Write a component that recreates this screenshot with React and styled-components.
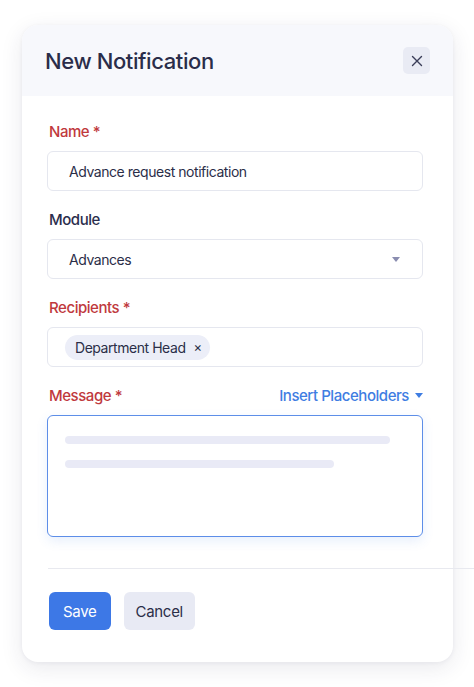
import React from "react";
import styled, { createGlobalStyle } from "styled-components";

const Global = createGlobalStyle`
  html, body { margin: 0; padding: 0; background: #ffffff; overflow: hidden; }
  body { font-family: Inter, "Noto Sans", sans-serif; -webkit-font-smoothing: antialiased; letter-spacing: -0.45px; }
  * { box-sizing: border-box; }
`;

const Page = styled.div`
  width: 474px;
  height: 687px;
  padding: 25px 0 0 22px;
`;

const Card = styled.div`
  width: 431px;
  height: 637px;
  background: #fff;
  border-radius: 16px;
  box-shadow: 0 6px 22px rgba(40, 44, 80, 0.10), 0 1px 4px rgba(40, 44, 80, 0.05);
  display: flex;
  flex-direction: column;
`;

const Header = styled.div`
  height: 71px;
  background: #f7f8fc;
  border-radius: 16px 16px 0 0;
  display: flex;
  align-items: center;
  justify-content: space-between;
  padding: 0 23px 0 23px;
`;

const Title = styled.h1`
  margin: 0;
  font-size: 22px;
  font-weight: 500;
  color: #2a2d4a;
  letter-spacing: -0.4px;
`;

const CloseBtn = styled.button`
  width: 27px;
  height: 27px;
  border: none;
  border-radius: 5px;
  background: #e9ebf4;
  display: flex;
  align-items: center;
  justify-content: center;
  padding: 0;
`;

const Body = styled.div`
  padding: 25px 30px 0 25px;
  display: flex;
  flex-direction: column;
`;

const Fields = styled.div`
  display: flex;
  flex-direction: column;
  gap: 18px;
`;

const Field = styled.div`
  display: flex;
  flex-direction: column;
  gap: 10px;
`;

const LabelRow = styled.div`
  display: flex;
  align-items: center;
  justify-content: space-between;
  height: 20px;
  padding-left: 2px;
`;

const Label = styled.label`
  font-size: 15px;
  font-weight: 500;
  color: ${(p) => (p.$required ? "#c0393d" : "#2b2e4d")};
`;

const Box = styled.div`
  height: ${(p) => p.$h || 40}px;
  border: 1px solid ${(p) => (p.$focus ? "#5d8ee8" : "#e5e7ef")};
  border-radius: 6px;
  background: #fff;
  display: flex;
  align-items: center;
  padding: 0 20px 0 21px;
  font-size: 14px;
  color: #2b2e48;
  box-shadow: ${(p) => (p.$focus ? "0 4px 12px rgba(61, 123, 228, 0.12)" : "none")};
`;

const SelectBox = styled(Box)`
  justify-content: space-between;
  padding-right: 22px;
`;

const Caret = styled.span`
  width: 0;
  height: 0;
  border-left: 4px solid transparent;
  border-right: 4px solid transparent;
  border-top: 5px solid ${(p) => p.$color || "#8a8db0"};
`;

const ChipBox = styled(Box)`
  padding-left: 17px;
`;

const Chip = styled.span`
  display: inline-flex;
  align-items: center;
  gap: 8px;
  height: 25px;
  padding: 0 8px 0 10px;
  border-radius: 13px;
  background: #eceef8;
  font-size: 14px;
  color: #2b2e48;
`;

const ChipX = styled.span`
  font-size: 13px;
  color: #2b2e48;
  line-height: 1;
`;

const Link = styled.span`
  display: inline-flex;
  align-items: center;
  gap: 6px;
  font-size: 15px;
  font-weight: 500;
  color: #3f7de2;
`;

const TextArea = styled(Box)`
  flex-direction: column;
  align-items: flex-start;
  justify-content: flex-start;
  padding: 20px 0 0 17px;
  gap: 16px;
`;

const Skeleton = styled.div`
  height: 8px;
  width: ${(p) => p.$w}px;
  border-radius: 4px;
  background: #e9eaf6;
`;

const Divider = styled.div`
  margin: 31px 0 0 1px;
  width: 440px;
  height: 1px;
  background: #e8e9ef;
`;

const Actions = styled.div`
  display: flex;
  gap: 13px;
  padding: 23px 0 0 2px;
`;

const Button = styled.button`
  height: 38px;
  padding: 0 ${(p) => p.$pad}px;
  border: none;
  border-radius: 6px;
  font-family: inherit;
  letter-spacing: -0.3px;
  font-size: 15px;
  font-weight: 400;
  background: ${(p) => (p.$primary ? "#3d78e6" : "#e8eaf4")};
  color: ${(p) => (p.$primary ? "#ffffff" : "#2b2e48")};
`;

export default function App() {
  return (
    <Page>
      <Global />
      <Card>
        <Header>
          <Title>New Notification</Title>
          <CloseBtn aria-label="Close">
            <svg width="12" height="12" viewBox="0 0 12 12">
              <path d="M1.5 1.5 L10.5 10.5 M10.5 1.5 L1.5 10.5" stroke="#3a3d58" strokeWidth="1.4" strokeLinecap="round" />
            </svg>
          </CloseBtn>
        </Header>
        <Body>
          <Fields>
            <Field>
              <LabelRow><Label $required>Name *</Label></LabelRow>
              <Box>Advance request notification</Box>
            </Field>
            <Field>
              <LabelRow><Label>Module</Label></LabelRow>
              <SelectBox>
                <span>Advances</span>
                <Caret />
              </SelectBox>
            </Field>
            <Field>
              <LabelRow><Label $required>Recipients *</Label></LabelRow>
              <ChipBox>
                <Chip>Department Head <ChipX>×</ChipX></Chip>
              </ChipBox>
            </Field>
            <Field>
              <LabelRow>
                <Label $required>Message *</Label>
                <Link>Insert Placeholders <Caret $color="#3f7de2" /></Link>
              </LabelRow>
              <TextArea $h={122} $focus>
                <Skeleton $w={325} />
                <Skeleton $w={269} />
              </TextArea>
            </Field>
          </Fields>
          <Divider />
          <Actions>
            <Button $primary $pad={14}>Save</Button>
            <Button $pad={12}>Cancel</Button>
          </Actions>
        </Body>
      </Card>
    </Page>
  );
}
